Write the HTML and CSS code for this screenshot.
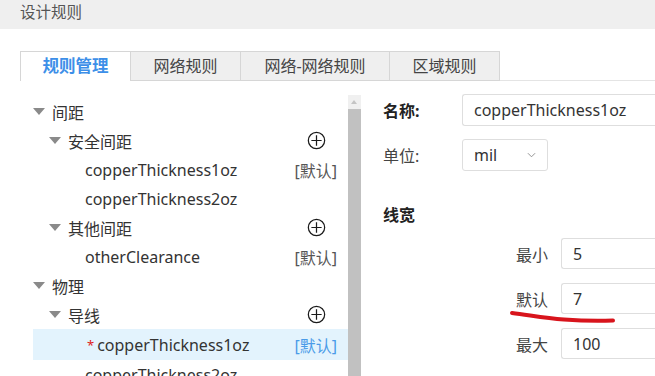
FILE: index.html
```html
<!DOCTYPE html>
<html lang="zh-CN">
<head>
    <meta charset="UTF-8" />
    <meta name="viewport" content="width=device-width, initial-scale=1.0" />
    <title>设计规则</title>
    <link rel="stylesheet" href="styles.css">
</head>
<body>
    <div class="header">设计规则</div>
    <div class="main">
        <div class="tabs">
            <div class="tab active">规则管理</div>
            <div class="tab">网络规则</div>
            <div class="tab wide">网络-网络规则</div>
            <div class="tab">区域规则</div>
            <div class="tab-fill"></div>
        </div>
        <div class="content">
            <div class="tree">
                <div class="tree-list">
                    <div class="row lvl0"><span class="arrow"></span><span class="name">间距</span></div>
                    <div class="row lvl1"><span class="arrow"></span><span class="name">安全间距</span><svg class="plus" viewBox="0 0 20 20"><circle cx="10" cy="10" r="8.6"/><path d="M10 4.6v10.8M4.6 10h10.8"/></svg></div>
                    <div class="row lvl2"><span class="name">copperThickness1oz</span><span class="tag">[默认]</span></div>
                    <div class="row lvl2"><span class="name">copperThickness2oz</span></div>
                    <div class="row lvl1"><span class="arrow"></span><span class="name">其他间距</span><svg class="plus" viewBox="0 0 20 20"><circle cx="10" cy="10" r="8.6"/><path d="M10 4.6v10.8M4.6 10h10.8"/></svg></div>
                    <div class="row lvl2"><span class="name">otherClearance</span><span class="tag">[默认]</span></div>
                    <div class="row lvl0"><span class="arrow"></span><span class="name">物理</span></div>
                    <div class="row lvl1"><span class="arrow"></span><span class="name">导线</span><svg class="plus" viewBox="0 0 20 20"><circle cx="10" cy="10" r="8.6"/><path d="M10 4.6v10.8M4.6 10h10.8"/></svg></div>
                    <div class="row lvl2 selected"><span class="star">*</span><span class="name">copperThickness1oz</span><span class="tag">[默认]</span></div>
                    <div class="row lvl2"><span class="name">copperThickness2oz</span></div>
                </div>
                <div class="scrollbar">
                    <div class="scroll-up"></div>
                    <div class="scroll-thumb"></div>
                </div>
            </div>
            <div class="form">
                <div class="field">
                    <label class="label bold">名称:</label>
                    <div class="input name-input">copperThickness1oz</div>
                </div>
                <div class="field">
                    <label class="label">单位:</label>
                    <div class="input select">mil<svg class="chevron" viewBox="0 0 10 6"><path d="M1 1l4 4 4-4"/></svg></div>
                </div>
                <div class="section">线宽</div>
                <div class="width-rows">
                    <div class="wfield"><label class="wlabel">最小</label><div class="input winput">5</div></div>
                    <div class="wfield"><label class="wlabel">默认</label><div class="input winput">7</div></div>
                    <div class="wfield"><label class="wlabel">最大</label><div class="input winput">100</div></div>
                    <svg class="mark" viewBox="0 0 110 14"><path d="M3 3C20 5 35 8 55 9.5C75 11 92 11 104 10.5"/></svg>
                </div>
            </div>
        </div>
    </div>
</body>
</html>
```

FILE: styles.css
```css
body{
    margin: 0;
    width: 655px;
    height: 376px;
    overflow: hidden;
    background: #fff;
    font-family: "Noto Sans", "Noto Sans CJK SC", sans-serif;
    color: #333;
}

.header{
    height: 29px;
    line-height: 25px;
    background: #efefef;
    padding-left: 20px;
    font-size: 15.5px;
    color: #555;
}

.main{
    padding-left: 20px;
}

.tabs{
    display: flex;
    margin-top: 22px;
    height: 30px;
}

.tab{
    width: 110px;
    box-sizing: border-box;
    border: 1px solid #d6d6d6;
    border-left: none;
    background: #efefef;
    text-align: center;
    line-height: 28px;
    font-size: 16px;
    color: #444;
}

.tab:first-child{
    border-left: 1px solid #d6d6d6;
    width: 111px;
}

.tab.wide{
    width: 149px;
}

.tab.active{
    background: #fff;
    border-bottom: none;
    color: #3d8fe8;
    font-weight: 700;
    font-size: 16.5px;
}

.tab-fill{
    flex: 1;
    border-bottom: 1px solid #e4e4e4;
    height: 29px;
}

.content{
    display: flex;
    height: 295px;
}

.tree{
    display: flex;
    width: 341px;
}

.tree-list{
    flex: 1;
    padding: 16px 0 0 13px;
}

.row{
    display: flex;
    align-items: center;
    height: 29px;
    font-size: 16px;
    color: #333;
    padding-right: 11px;
}

.row .name{
    flex: 1;
}

.lvl1{
    padding-left: 16px;
}

.lvl2{
    padding-left: 52px;
}

.arrow{
    width: 0;
    height: 0;
    border-left: 6px solid transparent;
    border-right: 6px solid transparent;
    border-top: 7px solid #8a8a8a;
    margin-right: 7px;
}

.plus{
    width: 19px;
    height: 19px;
    margin-right: 11px;
    fill: none;
    stroke: #1a1a1a;
    stroke-width: 1.3;
}

.tag{
    color: #555;
}

.selected{
    background: #e3f3fd;
    height: 31px;
}

.selected .tag{
    color: #4a9be8;
}

.star{
    color: #e02020;
    font-size: 13px;
    margin: 0 3px 0 2px;
}

.scrollbar{
    width: 13px;
    background: #f0f0f0;
    margin-top: 14px;
    display: flex;
    flex-direction: column;
}

.scroll-up{
    height: 14px;
    position: relative;
}

.scroll-up::after{
    content: "";
    position: absolute;
    left: 3px;
    top: 5px;
    border-left: 3.5px solid transparent;
    border-right: 3.5px solid transparent;
    border-bottom: 4px solid #c4c4c4;
}

.scroll-thumb{
    flex: 1;
    background: #c1c1c1;
}

.form{
    flex: 1;
    padding: 13px 0 0 22px;
}

.field{
    display: flex;
    align-items: center;
    margin-bottom: 13px;
}

.label{
    width: 79px;
    font-size: 16px;
    color: #444;
}

.bold{
    font-weight: 700;
    color: #222;
}

.input{
    box-sizing: border-box;
    border: 1px solid #dedede;
    border-radius: 3px;
    height: 32px;
    line-height: 30px;
    padding-left: 11px;
    font-size: 16px;
    color: #333;
}

.name-input{
    flex: 1;
    border-right: none;
    border-radius: 3px 0 0 3px;
}

.select{
    width: 86px;
    display: flex;
    align-items: center;
}

.chevron{
    width: 9px;
    height: 6px;
    margin-left: auto;
    margin-right: 11px;
    fill: none;
    stroke: #888;
    stroke-width: 1;
}

.section{
    font-size: 16px;
    font-weight: 700;
    color: #222;
    margin-top: 31px;
}

.width-rows{
    position: relative;
    padding-left: 133px;
    margin-top: 12px;
}

.wfield{
    display: flex;
    align-items: center;
    margin-bottom: 14px;
}

.wlabel{
    width: 45px;
    font-size: 16px;
    color: #444;
}

.winput{
    flex: 1;
    height: 31px;
    border-right: none;
    border-radius: 3px 0 0 3px;
}

.mark{
    position: absolute;
    left: 126px;
    top: 72px;
    width: 110px;
    height: 14px;
    fill: none;
    stroke: #d8141c;
    stroke-width: 4;
    stroke-linecap: round;
}
```
